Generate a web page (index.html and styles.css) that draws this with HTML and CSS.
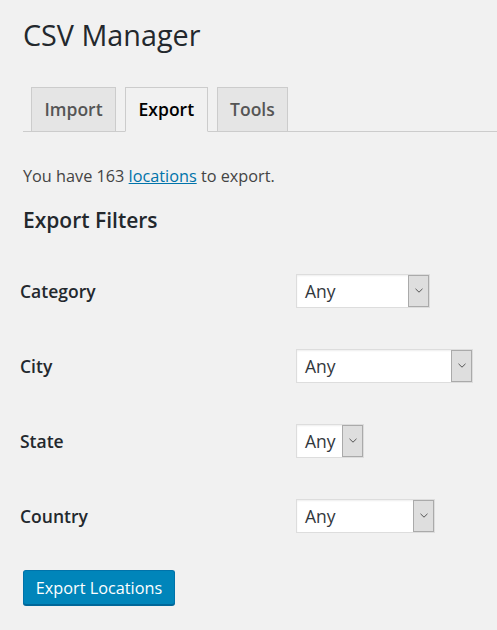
FILE: index.html
```html
<!DOCTYPE html>
<html>
<head>
<meta charset="utf-8">
<link rel="stylesheet" href="styles.css">
</head>
<body>
<div class="wrap">
  <h1 class="title">CSV Manager</h1>
  <div class="tabs">
    <span class="tab">Import</span>
    <span class="tab active">Export</span>
    <span class="tab">Tools</span>
  </div>
  <p class="intro">You have 163 <a href="#">locations</a> to export.</p>
  <h2 class="section">Export Filters</h2>
  <div class="form">
    <div class="row">
      <div class="label">Category</div>
      <div class="select w-cat"><span class="val">Any</span><span class="arrow"><svg width="8" height="5" viewBox="0 0 8 5"><path d="M0.5 0.8 L4 4.2 L7.5 0.8" fill="none" stroke="#555" stroke-width="1"/></svg></span></div>
    </div>
    <div class="row">
      <div class="label">City</div>
      <div class="select w-city"><span class="val">Any</span><span class="arrow"><svg width="8" height="5" viewBox="0 0 8 5"><path d="M0.5 0.8 L4 4.2 L7.5 0.8" fill="none" stroke="#555" stroke-width="1"/></svg></span></div>
    </div>
    <div class="row">
      <div class="label">State</div>
      <div class="select w-state"><span class="val">Any</span><span class="arrow"><svg width="8" height="5" viewBox="0 0 8 5"><path d="M0.5 0.8 L4 4.2 L7.5 0.8" fill="none" stroke="#555" stroke-width="1"/></svg></span></div>
    </div>
    <div class="row">
      <div class="label">Country</div>
      <div class="select w-country"><span class="val">Any</span><span class="arrow"><svg width="8" height="5" viewBox="0 0 8 5"><path d="M0.5 0.8 L4 4.2 L7.5 0.8" fill="none" stroke="#555" stroke-width="1"/></svg></span></div>
    </div>
  </div>
  <button class="btn">Export Locations</button>
</div>
</body>
</html>
```
FILE: styles.css
```css
html, body {
  margin: 0;
  padding: 0;
  background: #f1f1f1;
}
body {
  font-family: "Open Sans", "DejaVu Sans", sans-serif;
  color: #444;
  width: 497px;
  height: 630px;
  overflow: hidden;
}
.wrap {
  padding-left: 23px;
}
.title {
  margin: 0;
  padding-top: 16px;
  font-size: 28.75px;
  line-height: 37px;
  font-weight: 400;
  color: #23282d;
}
.tabs {
  margin-top: 34px;
  display: flex;
  gap: 9px;
  padding-left: 8px;
  border-bottom: 1px solid #ccc;
}
.tab {
  display: block;
  padding: 6px 12.5px 7px;
  line-height: 30px;
  font-size: 17.5px;
  font-weight: 600;
  color: #555;
  background: #e5e5e5;
  border: 1px solid #ccc;
  margin-bottom: -1px;
}
.tab.active {
  background: #f1f1f1;
  color: #000;
  border-bottom-color: #f1f1f1;
}
.intro {
  margin: 32px 0 0;
  font-size: 16.25px;
  line-height: 24px;
  color: #444;
}
.intro a {
  color: #0073aa;
  text-decoration: underline;
}
.section {
  margin: 18px 0 0;
  font-size: 21px;
  line-height: 29px;
  font-weight: 600;
  color: #23282d;
}
.form {
  margin-top: 18px;
  margin-left: -3px;
}
.row {
  display: flex;
  align-items: center;
  height: 75px;
}
.label {
  width: 276px;
  font-size: 17.5px;
  font-weight: 600;
  color: #23282d;
}
.select {
  box-sizing: border-box;
  height: 34px;
  background: #fff;
  border: 1px solid #ddd;
  box-shadow: inset 0 1px 2px rgba(0,0,0,0.07);
  display: flex;
  align-items: stretch;
  justify-content: space-between;
}
.w-cat { width: 134px; }
.w-city { width: 177px; }
.w-state { width: 68px; }
.w-country { width: 139px; }
.val {
  padding-left: 8px;
  font-size: 17.5px;
  line-height: 32px;
  color: #32373c;
}
.arrow {
  box-sizing: border-box;
  width: 21px;
  background: #dedede;
  border: 1px solid #aaa;
  display: flex;
  align-items: center;
  justify-content: center;
}
.btn {
  display: block;
  margin-top: 17px;
  box-sizing: border-box;
  width: 152px;
  height: 35px;
  padding: 0;
  white-space: nowrap;
  font-family: "Open Sans", "DejaVu Sans", sans-serif;
  font-size: 16.25px;
  line-height: 32px;
  color: #fff;
  background: #0085ba;
  border: 1px solid #0073aa;
  border-bottom-color: #006799;
  border-radius: 3px;
  box-shadow: 0 1px 0 #006799;
  text-align: center;
  cursor: pointer;
}
```
